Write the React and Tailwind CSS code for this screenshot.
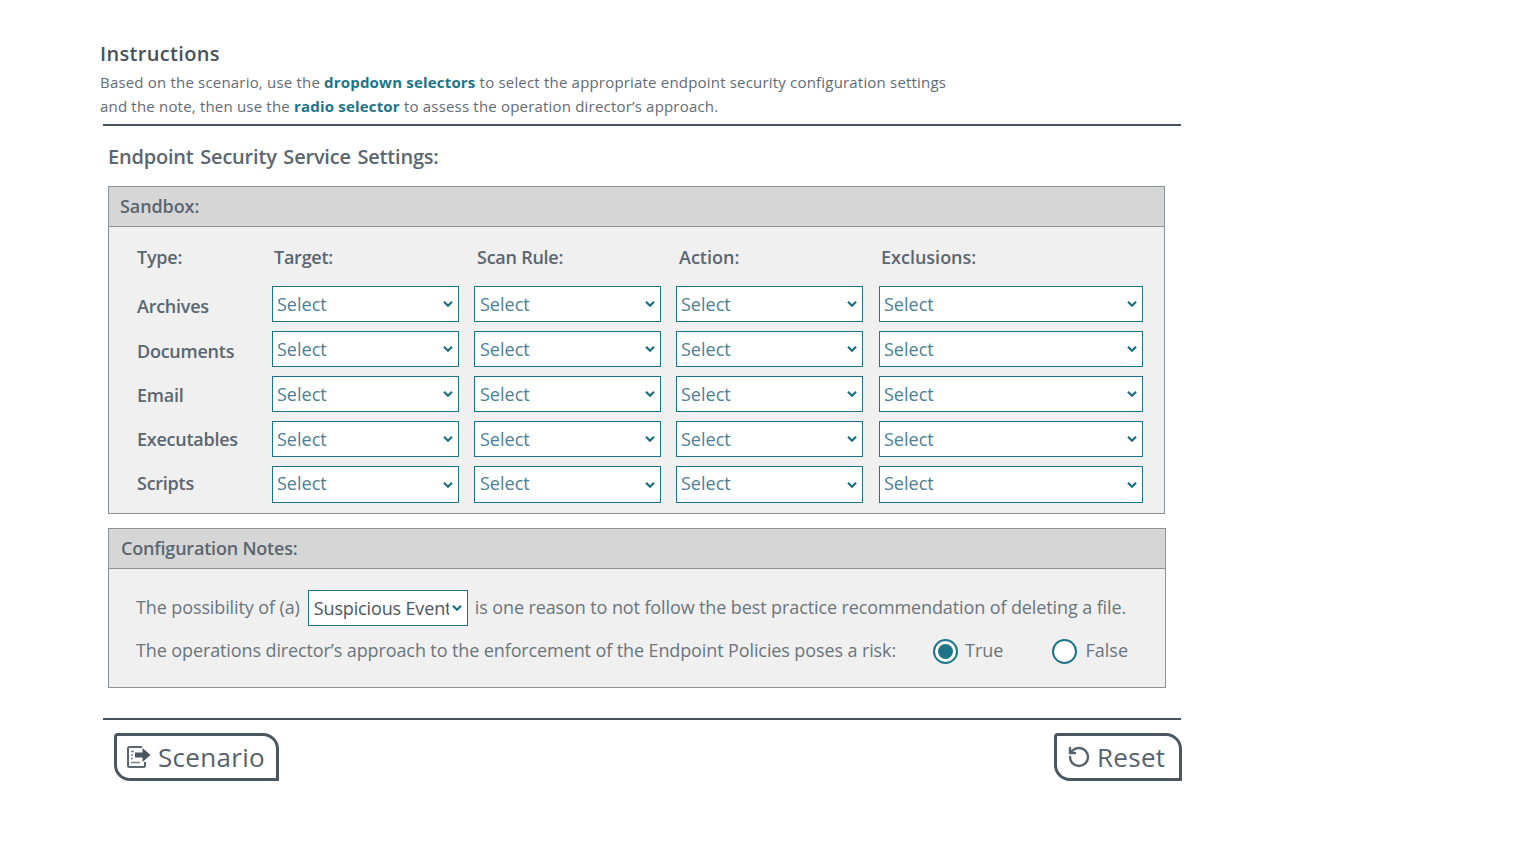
import React from "react";
import { RotateCcw } from "lucide-react";

const rows = [
  ["Archives", "pt-[4px]", ""],
  ["Documents", "pt-[4px]", ""],
  ["Email", "pt-[2px]", ""],
  ["Executables", "", ""],
  ["Scripts", "pb-[2px]", "pb-[2px]"],
];

function Sel({ className = "", selectClass = "", children = "Select" }) {
  return (
    <div className={`relative h-full ${className}`}>
      <select
        className={`block w-full h-full appearance-none bg-white border border-[#1b7488] text-[#4b7f97] text-[18px] font-normal tracking-normal rounded-none outline-none pr-[18px] font-['Open_Sans',sans-serif] ${selectClass}`}
        defaultValue={children}
      >
        <option>{children}</option>
      </select>
      <svg width="10" height="7" viewBox="0 0 10 7" className="absolute right-[6px] top-1/2 -translate-y-1/2 pointer-events-none">
        <path d="M1 1.300l4 4 4-4" fill="none" stroke="#1b6f85" strokeWidth="2.200" />
      </svg>
    </div>
  );
}

function Radio({ checked }) {
  return (
    <span className="w-[25px] h-[25px] rounded-full border-2 border-[#1b7488] bg-white flex items-center justify-center shrink-0">
      {checked && <span className="w-[15px] h-[15px] rounded-full bg-[#1b7488]" />}
    </span>
  );
}

function ScenarioIcon() {
  return (
    <svg width="26" height="26" viewBox="0 0 26 26" className="shrink-0">
      <path d="M16 3H3.500A1.500 1.500 0 0 0 2 4.500v17A1.500 1.500 0 0 0 3.500 23h14a1.500 1.500 0 0 0 1.500-1.500V18" fill="none" stroke="#5b6770" strokeWidth="2" />
      <path d="M5 7.500h3M5 11h2M5 14.500h2M5 18.500h9" stroke="#7a858d" strokeWidth="1.600" fill="none" />
      <path d="M9 8.500h7.500V4l8 7-8 7v-4.500H9z" fill="#4a5660" />
    </svg>
  );
}

export default function App() {
  return (
    <div className="w-[1536px] h-[868px] bg-white overflow-hidden pt-[40px] pl-[100px] font-['Open_Sans',sans-serif] text-[#56626b]">
      <div className="w-[1081px]">
        <h1 className="text-[20px] leading-[28px] font-semibold text-[#46525c] tracking-[0.33px]">Instructions</h1>
        <p className="text-[15px] leading-[24px] mt-[2px] text-[#5f6b74] w-[900px] tracking-[0.19px]">
          Based on the scenario, use the <b className="font-bold text-[#1b7488]">dropdown selectors</b> to select the appropriate endpoint security configuration settings
          <br />
          and the note, then use the <b className="font-bold text-[#1b7488]">radio selector</b> to assess the operation director’s approach.
        </p>
        <div className="ml-[3px] mt-[6px] h-[2px] bg-[#46525c]" />

        <div className="ml-[8px] w-[1058px]">
          <h2 className="mt-[17px] text-[20px] leading-[28px] font-semibold text-[#5a6670] tracking-[-0.2px] [word-spacing:1.700px]">Endpoint Security Service Settings:</h2>

          <section className="mt-[15px] w-[1057px] border border-[#8a9298] bg-[#f0f0f0]">
            <div className="h-[40px] bg-[#d6d6d6] border-b border-[#8a9298] pl-[11px] flex items-center text-[18px] font-semibold text-[#5a6670] tracking-[-0.1px]">Sandbox:</div>
            <div className="pl-[28px] pt-[18px] pb-[10px]">
              <div className="grid grid-cols-[120px_187px_187px_187px_265px] gap-x-[15px] gap-y-[9px] grid-rows-[32px_36px_36px_36px_36px_37px] text-[18px] font-semibold text-[#5a6670] tracking-[-0.25px]">
                <div className="leading-[24px]">Type:</div>
                <div className="leading-[24px] pl-[2px]">Target:</div>
                <div className="leading-[24px] pl-[3px]">Scan Rule:</div>
                <div className="leading-[24px] pl-[3px] tracking-normal">Action:</div>
                <div className="leading-[24px] pl-[3px] tracking-normal">Exclusions:</div>
                {rows.map(([r, pad, selPad]) => (
                  <React.Fragment key={r}>
                    <div className={`flex items-center ${pad}`}>{r}</div>
                    <Sel className="w-[187px]" selectClass={`pl-[4px] ${selPad}`} />
                    <Sel className="w-[187px]" selectClass={`pl-[5px] ${selPad}`} />
                    <Sel className="w-[187px]" selectClass={`pl-[4px] ${selPad}`} />
                    <Sel className="w-[264px] ml-[1px]" selectClass={`pl-[4px] ${selPad}`} />
                  </React.Fragment>
                ))}
              </div>
            </div>
          </section>

          <section className="mt-[14px] w-[1058px] h-[160px] border border-[#8a9298] bg-[#f0f0f0] text-[18px] text-[#6a757d]">
            <div className="h-[40px] bg-[#d6d6d6] border-b border-[#8a9298] pl-[12px] flex items-center font-semibold text-[#5a6670] tracking-[-0.2px]">Configuration Notes:</div>
            <div className="pl-[27px] pt-[21px] tracking-[-0.11px]">
              <div className="h-[36px] flex items-center">
                <span className="pb-[2px]">The possibility of (a)</span>
                <Sel className="w-[160px] ml-[8px] mr-[7px]" selectClass="pl-[5px] !text-[#4a5660] !tracking-[-0.15px]">Suspicious Event</Sel>
                <span className="pb-[2px]">is one reason to not follow the best practice recommendation of deleting a file.</span>
              </div>
              <div className="h-[30px] mt-[10px] flex items-center">
                <span className="pb-[2px]">The operations director’s approach to the enforcement of the Endpoint Policies poses a risk:</span>
                <span className="ml-[37px] flex items-center gap-[7px] tracking-normal"><Radio checked /><span className="pb-[2px]">True</span></span>
                <span className="ml-[49px] flex items-center gap-[8px] tracking-normal"><Radio /><span className="pb-[2px]">False</span></span>
              </div>
            </div>
          </section>
        </div>

        <div className="ml-[3px] mt-[30px] h-[2px] bg-[#46525c]" />

        <div className="mt-[13px] ml-[14px] -mr-[1px] flex justify-between items-start">
          <button className="w-[165px] h-[48px] border-[3px] border-[#4a5660] rounded-tl-[4px] rounded-tr-[16px] rounded-bl-[16px] rounded-br-none flex items-center gap-[6px] pl-[9px] text-[26px] font-medium text-[#56626b] tracking-[0.3px]">
            <ScenarioIcon />
            <span>Scenario</span>
          </button>
          <button className="w-[128px] h-[48px] border-[3px] border-[#4a5660] rounded-tl-[4px] rounded-tr-[16px] rounded-bl-[16px] rounded-br-none flex items-center gap-[6px] pl-[10px] text-[26px] font-medium text-[#56626b] tracking-[0.3px]">
            <RotateCcw size={24} strokeWidth={2.4} className="shrink-0" />
            <span>Reset</span>
          </button>
        </div>
      </div>
    </div>
  );
}
